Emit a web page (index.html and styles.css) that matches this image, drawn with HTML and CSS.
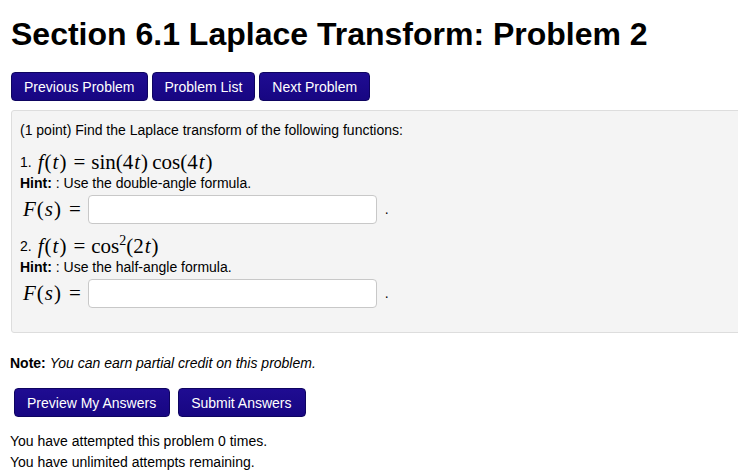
FILE: index.html
```html
<!DOCTYPE html>
<html lang="en">
<head>
    <meta charset="UTF-8">
    <meta name="viewport" content="width=device-width, initial-scale=1.0">
    <title>Section 6.1 Laplace Transform: Problem 2</title>
    <link rel="stylesheet" href="styles.css">
</head>
<body>
    <h1 class="title">Section 6.1 Laplace Transform: Problem 2</h1>

    <div class="nav">
        <button class="btn">Previous Problem</button>
        <button class="btn">Problem List</button>
        <button class="btn">Next Problem</button>
    </div>

    <div class="problem">
        <p class="intro">(1 point) Find the Laplace transform of the following functions:</p>

        <div class="part">
            <div class="line"><span class="num">1.</span><span class="math"><i>f</i>(<i>t</i>)<span class="op">=</span>sin(4<i>t</i>)&#8201;cos(4<i>t</i>)</span></div>
            <div class="hint"><b>Hint:</b> : Use the double-angle formula.</div>
            <div class="answer"><span class="math"><i>F</i>(<i>s</i>)<span class="op">=</span></span><input type="text" class="field"><span class="dot">.</span></div>
        </div>

        <div class="part">
            <div class="line"><span class="num">2.</span><span class="math"><i>f</i>(<i>t</i>)<span class="op">=</span>cos<sup>2</sup>(2<i>t</i>)</span></div>
            <div class="hint"><b>Hint:</b> : Use the half-angle formula.</div>
            <div class="answer"><span class="math"><i>F</i>(<i>s</i>)<span class="op">=</span></span><input type="text" class="field"><span class="dot">.</span></div>
        </div>
    </div>

    <p class="note"><b>Note:</b> <i>You can earn partial credit on this problem.</i></p>

    <div class="submit">
        <button class="btn">Preview My Answers</button>
        <button class="btn">Submit Answers</button>
    </div>

    <p class="info">You have attempted this problem 0 times.<br>You have unlimited attempts remaining.</p>
</body>
</html>
```

FILE: styles.css
```css
* { box-sizing: border-box; margin: 0; padding: 0; }
body { font-family: "Liberation Sans", Arial, sans-serif; font-size: 14px; color: #000; background: #fff; padding: 0 0 0 11px; overflow: hidden; }
.title { font-size: 32px; font-weight: bold; line-height: 38px; padding-top: 15px; margin-bottom: 19px; }
.nav { display: flex; gap: 4px; margin-bottom: 9px; }
.btn { background: #1b0a8a; background: linear-gradient(#1f0c92, #170682); color: #fff; border: 1px solid #0e0460; border-radius: 4px; font-family: "Liberation Sans", Arial, sans-serif; font-size: 14px; height: 29px; padding: 0 12px; cursor: pointer; }
.problem { width: 740px; height: 223px; background: #f4f4f4; border: 1px solid #ddd; border-radius: 3px 0 0 3px; padding: 11px 8px; }
.intro { line-height: 16px; margin-bottom: 12px; }
.part { margin-bottom: 11px; }
.line { height: 24px; display: flex; align-items: center; }
.num { font-size: 14px; margin-right: 5px; }
.math { font-family: "Liberation Serif", "Times New Roman", serif; font-size: 21px; }
.math i { font-style: italic; margin: 0 1px; }
.math sup { font-size: 14px; vertical-align: 8px; line-height: 0; }
.op { margin: 0 6px 0 7px; }
.hint { line-height: 18px; }
.answer { display: flex; align-items: center; height: 28px; margin-top: 3px; }
.answer .math { padding-left: 2px; margin-right: 0; }
.answer .op { margin: 0 7px 0 8px; }
.field { width: 289px; height: 29px; border: 1px solid #c8c8c8; border-radius: 4px; background: #fff; }
.dot { margin-left: 8px; }
.note { margin-top: 22px; line-height: 16px; margin-left: -1px; }
.submit { display: flex; gap: 8px; margin: 17px 0 0 3px; }
.submit .btn { padding: 0 13px 0 12px; }
.info { margin-top: 14px; line-height: 21px; margin-left: -1px; }
```
